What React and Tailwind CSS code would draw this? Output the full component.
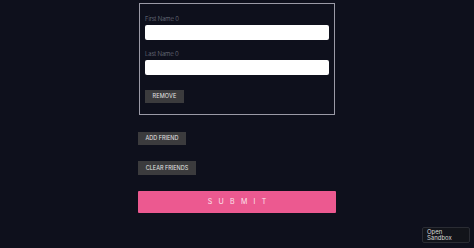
export default function App() {
  return (
    <div className="min-h-screen w-full bg-[#0e101c] font-['Inter',sans-serif] relative">
      <div className="mx-auto w-[198px] flex flex-col pt-[3px]">
        <div className="mx-px border border-[#9a9aa6] px-[5px] pt-[11px] pb-[11px]">
          <label className="block text-[6px] leading-[8px] text-[#757884] font-light tracking-tight">First Name 0</label>
          <input className="mt-[2px] w-full h-[15px] bg-white rounded-[2px] block" />
          <label className="block mt-[10px] text-[6px] leading-[8px] text-[#757884] font-light tracking-tight">Last Name 0</label>
          <input className="mt-[2px] w-full h-[15px] bg-white rounded-[2px] block" />
          <button className="mt-[15px] h-[13px] w-[39px] bg-[#3b3b3d] text-[5.5px] text-[#e6e6e6] tracking-wide flex items-center justify-center">REMOVE</button>
        </div>
        <button className="mt-[17px] h-[13px] w-[48px] bg-[#3b3b3d] text-[5.5px] text-[#e6e6e6] flex items-center justify-center">ADD FRIEND</button>
        <button className="mt-[16px] h-[14px] w-[58px] bg-[#3b3b3d] text-[5.5px] text-[#e6e6e6] flex items-center justify-center">CLEAR FRIENDS</button>
        <button className="mt-[16px] h-[22px] w-full bg-[#ec5990] rounded-[1px] text-[7px] text-[#fbe3ec] tracking-[0.9em] flex items-center justify-center pl-[0.9em]">SUBMIT</button>
      </div>
      <div className="absolute right-[4px] bottom-[5px] w-[48px] h-[16px] bg-[#12141a] border border-[#2a2c33] rounded-[2px] px-[4px] text-[6px] leading-[6.5px] text-[#d6d6d6] flex flex-col justify-center">
        <span>Open</span>
        <span>Sandbox</span>
      </div>
    </div>
  );
}
